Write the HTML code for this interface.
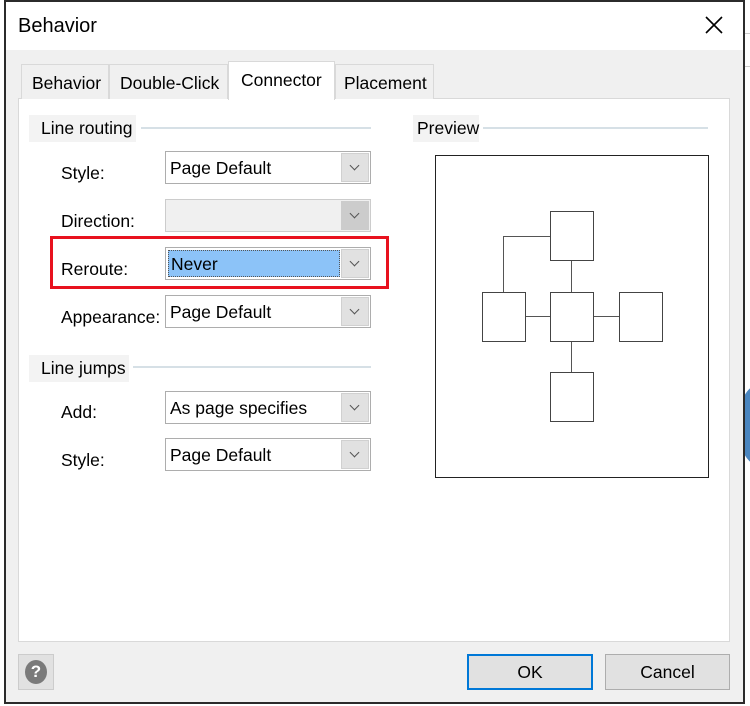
<!DOCTYPE html>
<html><head><style>
*{margin:0;padding:0;box-sizing:border-box}
body{width:750px;height:706px;background:#fff;position:relative;overflow:hidden;font-family:"Liberation Sans",sans-serif;color:#000}
.a{position:absolute}
.dlg{left:4px;top:0;width:741px;height:704px;border:2px solid #2b2b2b;background:#f0f0f0}
.lbl{font-size:17.5px}
.cb{position:absolute;left:165px;width:206px;height:33px;border:1px solid #adadad;background:#fff;font-size:17.5px;padding:6px 0 0 4px}
.cb .btn{position:absolute;right:1px;top:1px;width:28px;height:29px;background:#e1e1e1;border:1px solid #d0d0d0}
.cb .btn:after{content:"";position:absolute;left:9px;top:8px;width:6px;height:6px;border-right:1px solid #555;border-bottom:1px solid #555;transform:rotate(45deg)}
.hdr{font-size:17.5px;background:#f3f3f3;padding:3px 2px}
.line{height:2px;background:#d6e0e6}
.tab{position:absolute;top:64px;height:35px;background:#f0f0f0;border:1px solid #d9d9d9;border-bottom:none;font-size:17.5px;padding:8px 0 0 10px}
.box{position:absolute;width:44px;height:50px;border:1px solid #444;background:#fff}
.hl{position:absolute;background:#555}
</style></head><body>
<div class="a" style="left:745px;top:33px;width:5px;height:1px;background:#ccc"></div>
<div class="a" style="left:745px;top:66px;width:5px;height:1px;background:#ccc"></div>
<div class="a" style="left:738px;top:385px;width:40px;height:80px;border-radius:50%;background:#4a86c0"></div>
<div class="a dlg"></div>
<div class="a" style="left:6px;top:2px;width:737px;height:48px;background:#fff"></div>
<div class="a" style="left:18px;top:15px;font-size:20px">Behavior</div>
<svg class="a" style="left:704px;top:15px" width="20" height="20"><path d="M2 2L18 18M18 2L2 18" stroke="#000" stroke-width="1.6"/></svg>
<div class="a" style="left:18px;top:98px;width:712px;height:544px;background:#fff;border:1px solid #d9d9d9"></div>
<div class="tab" style="left:21px;width:88px">Behavior</div>
<div class="tab" style="left:109px;width:119px">Double-Click</div>
<div class="tab" style="left:228px;top:61px;height:39px;width:107px;background:#fff;padding-top:8px;padding-left:12px">Connector</div>
<div class="tab" style="left:335px;width:99px;padding-left:8px">Placement</div>
<div class="a hdr" style="left:29px;top:115px;width:107px;padding-left:12px">Line routing</div>
<div class="a line" style="left:141px;top:127px;width:230px"></div>
<div class="a hdr" style="left:413px;top:115px;width:66px;padding-left:4px">Preview</div>
<div class="a line" style="left:483px;top:127px;width:225px"></div>
<div class="a lbl" style="left:61px;top:163px">Style:</div>
<div class="cb" style="top:151px">Page Default<div class="btn"></div></div>
<div class="a lbl" style="left:61px;top:211px">Direction:</div>
<div class="cb" style="top:199px;background:#f0f0f0;border-color:#ccc"><div class="btn" style="background:#ccc;border-color:#ccc"></div></div>
<div class="a lbl" style="left:61px;top:259px">Reroute:</div>
<div class="cb" style="top:247px"><div class="a" style="left:2px;top:2px;width:172px;height:27px;background:#8cc3f8;border:1px dotted #555;padding:3px 0 0 2px">Never</div><div class="btn"></div></div>
<div class="a" style="left:50px;top:236px;width:339px;height:53px;border:3px solid #e8111e"></div>
<div class="a lbl" style="left:61px;top:307px">Appearance:</div>
<div class="cb" style="top:295px">Page Default<div class="btn"></div></div>
<div class="a hdr" style="left:29px;top:355px;width:100px;padding-left:12px">Line jumps</div>
<div class="a line" style="left:133px;top:366px;width:238px"></div>
<div class="a lbl" style="left:61px;top:402px">Add:</div>
<div class="cb" style="top:391px">As page specifies<div class="btn"></div></div>
<div class="a lbl" style="left:61px;top:450px">Style:</div>
<div class="cb" style="top:438px">Page Default<div class="btn"></div></div>
<div class="a" style="left:435px;top:155px;width:274px;height:323px;border:1px solid #222;background:#fff"></div>
<div class="hl" style="left:503px;top:236px;width:1px;height:56px"></div>
<div class="hl" style="left:503px;top:236px;width:47px;height:1px"></div>
<div class="hl" style="left:571px;top:260px;width:1px;height:32px"></div>
<div class="hl" style="left:571px;top:341px;width:1px;height:31px"></div>
<div class="hl" style="left:525px;top:316px;width:25px;height:1px"></div>
<div class="hl" style="left:593px;top:316px;width:26px;height:1px"></div>
<div class="box" style="left:550px;top:211px"></div>
<div class="box" style="left:482px;top:292px"></div>
<div class="box" style="left:550px;top:292px"></div>
<div class="box" style="left:619px;top:292px"></div>
<div class="box" style="left:550px;top:372px"></div>
<div class="a" style="left:18px;top:654px;width:36px;height:36px;background:#e1e1e1;border:1px solid #ccc"></div>
<div class="a" style="left:25px;top:660px;width:22px;height:24px;border-radius:50%;background:#7a7a7a;color:#fff;font-weight:bold;font-size:17px;text-align:center;line-height:24px">?</div>
<div class="a" style="left:467px;top:654px;width:126px;height:36px;background:#e1e1e1;border:2px solid #0078d7;font-size:17.5px;text-align:center;line-height:32px">OK</div>
<div class="a" style="left:605px;top:654px;width:125px;height:36px;background:#e1e1e1;border:1px solid #adadad;font-size:17.5px;text-align:center;line-height:34px">Cancel</div>
</body></html>
